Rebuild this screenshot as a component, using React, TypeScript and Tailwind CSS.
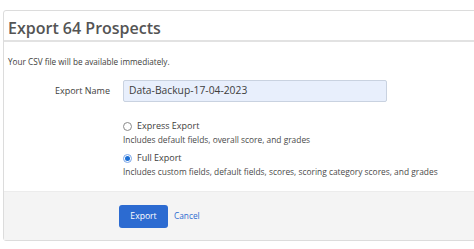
export default function App() {
  return (
    <div className="w-[474px] h-[249px] bg-white overflow-hidden pt-[10px] pl-[3px]" style={{ fontFamily: "'Open Sans', 'Noto Sans', sans-serif" }}>
      <div className="w-[480px] border border-[#dcdcdc] rounded-[3px] text-[#3e3e3c]">
        <div className="h-[31px] border-b-2 border-[#e2e2e2] pl-[4px] pb-[4px] flex items-end">
          <h1 className="text-[16px] font-semibold text-[#545454] leading-none">Export 64 Prospects</h1>
        </div>
        <div className="pl-[4px] pt-[14px] pb-[12px]">
          <p className="text-[8.2px] leading-[12px]">Your CSV file will be available immediately.</p>
          <div className="flex items-center mt-[12px]">
            <div className="w-[102px] text-right text-[9px]">Export Name</div>
            <div className="ml-[13px] w-[264px] h-[22px] bg-[#e8effc] border border-[#c9d2e0] rounded-[2px] flex items-center pl-[5px] text-[10.3px]">
              Data-Backup-17-04-2023
            </div>
          </div>
          <div className="ml-[115px] mt-[17px] flex flex-col">
            <label className="h-[14px] flex items-center gap-[5px] text-[9px]">
              <span className="w-[9px] h-[9px] rounded-full border border-[#8a8a8a] bg-white" />
              Express Export
            </label>
            <p className="h-[14px] text-[8.4px] leading-[14px] text-[#4a4a4a]">Includes default fields, overall score, and grades</p>
            <label className="h-[14px] mt-[4px] flex items-center gap-[5px] text-[9px]">
              <span className="w-[9px] h-[9px] rounded-full border border-[#7aa6e8] bg-white flex items-center justify-center">
                <span className="w-[5px] h-[5px] rounded-full bg-[#1b6fd6]" />
              </span>
              Full Export
            </label>
            <p className="h-[14px] text-[8.4px] leading-[14px] text-[#4a4a4a] whitespace-nowrap">Includes custom fields, default fields, scores, scoring category scores, and grades</p>
          </div>
        </div>
        <div className="bg-[#f4f4f4] border-t border-[#ececec] h-[49px] flex items-center pl-[115px]">
          <button className="w-[49px] h-[23px] bg-[#2c6bd1] text-white text-[8.6px] rounded-[3px]">Export</button>
          <span className="ml-[6px] text-[8.3px] text-[#2c6bd1]">Cancel</span>
        </div>
      </div>
    </div>
  );
}
